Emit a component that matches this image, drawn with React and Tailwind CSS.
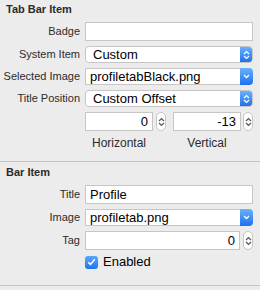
import React from "react";

function Label({ children }) {
  return (
    <div className="w-[80px] shrink-0 flex justify-end whitespace-nowrap text-[11px] text-[#2b2b2b]">
      {children}
    </div>
  );
}

function Row({ label, children, h = "h-[19px]" }) {
  return (
    <div className={`flex items-center gap-[5px] ${h}`}>
      <Label>{label}</Label>
      <div className="flex-1 h-full pr-[7px]">{children}</div>
    </div>
  );
}

function TextField({ value = "", align = "left" }) {
  return (
    <div
      className={`h-full bg-white border border-[#c6c6c6] px-[4px] flex items-center text-[13px] text-black ${
        align === "right" ? "justify-end" : ""
      }`}
    >
      {value}
    </div>
  );
}

function UpDown({ className = "" }) {
  return (
    <svg width="7" height="10" viewBox="0 0 7 10" className={className}>
      <path d="M1 4 L3.5 1.5 L6 4 M1 6 L3.5 8.5 L6 6" fill="none" stroke="currentColor" strokeWidth="1.2" />
    </svg>
  );
}

function Down() {
  return (
    <svg width="7" height="5" viewBox="0 0 7 5">
      <path d="M1 1 L3.5 3.5 L6 1" fill="none" stroke="white" strokeWidth="1.3" />
    </svg>
  );
}

function Popup({ value }) {
  return (
    <div className="h-full flex bg-white border border-[#c6c6c6] rounded-[4px] overflow-hidden">
      <div className="flex-1 flex items-center pl-[7px] text-[13px] text-black">{value}</div>
      <div className="w-[12px] flex items-center justify-center bg-gradient-to-b from-[#69b1fb] to-[#1c6ff0] text-white">
        <UpDown />
      </div>
    </div>
  );
}

function Combo({ value }) {
  return (
    <div className="h-full flex">
      <div className="flex-1 flex items-center bg-white border border-[#c6c6c6] border-r-0 pl-[4px] text-[13px] text-black">
        {value}
      </div>
      <div className="w-[13px] flex items-center justify-center rounded-r-[4px] bg-gradient-to-b from-[#69b1fb] to-[#1c6ff0]">
        <Down />
      </div>
    </div>
  );
}

function Stepper() {
  return (
    <div className="w-[10px] h-full bg-white border border-[#c6c6c6] rounded-[5px] flex items-center justify-center text-[#555]">
      <UpDown />
    </div>
  );
}

function Header({ children }) {
  return <div className="pl-[6px] h-[14px] leading-[14px] text-[11px] font-bold text-[#2b2b2b]">{children}</div>;
}

export default function App() {
  return (
    <div className="w-[260px] h-[290px] bg-[#ececec] font-['Liberation_Sans',sans-serif] flex flex-col">
      <div className="pt-[2px]">
        <Header>Tab Bar Item</Header>
      </div>
      <div className="mt-[6px] flex flex-col gap-[5px]">
        <Row label="Badge">
          <TextField />
        </Row>
        <Row label="System Item" h="h-[17px]">
          <Popup value="Custom" />
        </Row>
        <Row label="Selected Image" h="h-[17px]">
          <Combo value="profiletabBlack.png" />
        </Row>
        <Row label="Title Position" h="h-[17px]">
          <Popup value="Custom Offset" />
        </Row>
      </div>
      <div className="mt-[5px] flex pl-[85px] gap-[7px]">
        <div className="flex flex-col items-center">
          <div className="flex h-[19px] gap-[3px]">
            <div className="w-[68px]">
              <TextField value="0" align="right" />
            </div>
            <Stepper />
          </div>
          <div className="mt-[5px] text-[12px] leading-[14px] text-[#2b2b2b] pr-[13px]">Horizontal</div>
        </div>
        <div className="flex flex-col items-center">
          <div className="flex h-[19px] gap-[2px]">
            <div className="w-[68px]">
              <TextField value="-13" align="right" />
            </div>
            <Stepper />
          </div>
          <div className="mt-[5px] text-[12px] leading-[14px] text-[#2b2b2b] pr-[12px]">Vertical</div>
        </div>
      </div>
      <div className="mt-[11px] h-px bg-[#c4c4c4]" />
      <div className="mt-[3px]">
        <Header>Bar Item</Header>
      </div>
      <div className="mt-[6px] flex flex-col gap-[5px]">
        <Row label="Title">
          <TextField value="Profile" />
        </Row>
        <Row label="Image" h="h-[17px]">
          <Combo value="profiletab.png" />
        </Row>
        <Row label="Tag">
          <div className="flex h-full gap-[3px]">
            <div className="flex-1">
              <TextField value="0" align="right" />
            </div>
            <Stepper />
          </div>
        </Row>
      </div>
      <div className="mt-[5px] flex items-center pl-[85px] gap-[5px] h-[14px]">
        <div className="w-[13px] h-[13px] rounded-[3px] bg-gradient-to-b from-[#5aa8fb] to-[#1f72f0] flex items-center justify-center">
          <svg width="9" height="8" viewBox="0 0 9 8">
            <path d="M1.2 4.2 L3.5 6.4 L7.8 1.2" fill="none" stroke="white" strokeWidth="1.5" />
          </svg>
        </div>
        <span className="text-[13px] text-black">Enabled</span>
      </div>
      <div className="mt-[16px] h-px bg-[#c4c4c4]" />
      <div className="flex-1 bg-[#ececec]" />
    </div>
  );
}
